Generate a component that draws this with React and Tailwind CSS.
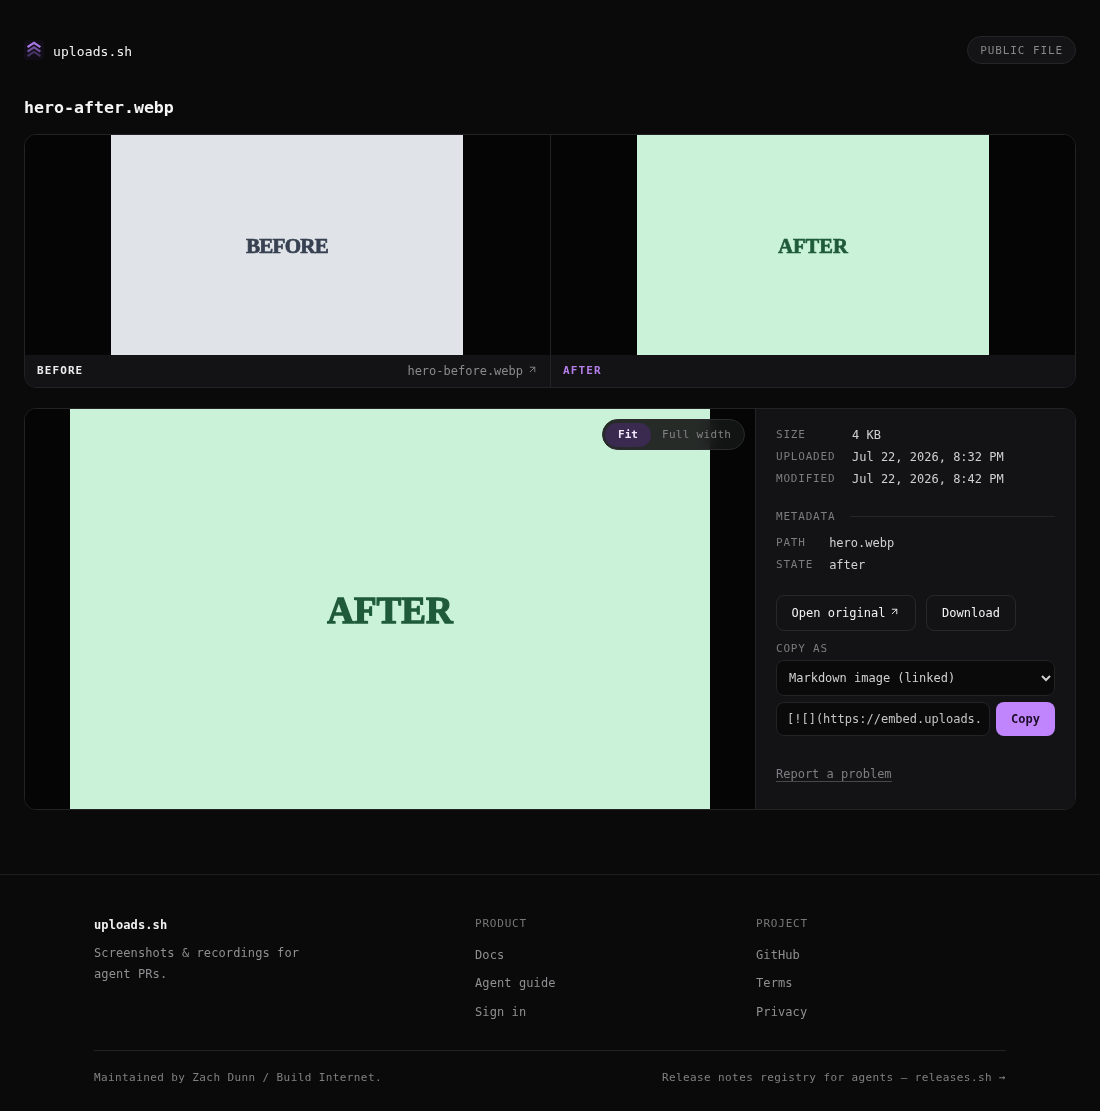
import { ArrowUpRight } from 'lucide-react'

const mono = "font-['DejaVu_Sans_Mono','Liberation_Mono',monospace]"

function Logo() {
  return (
    <svg width="20" height="20" viewBox="0 0 20 20" fill="none" strokeWidth="2.2" strokeLinecap="square">
      <rect width="20" height="20" rx="4" fill="#110e17" />
      <path d="M4.5 6.5 10 2.8 15.5 6.5" stroke="#a678e6" />
      <path d="M4.5 11 10 7.3 15.5 11" stroke="#71509c" />
      <path d="M4.5 15.5 10 11.8 15.5 15.5" stroke="#44325f" />
    </svg>
  )
}

function Label({ children, className = '' }) {
  return <span className={`text-[11px] leading-[22px] tracking-[0.8px] text-[#7c7c7e] ${className}`}>{children}</span>
}

function Row({ label, value }) {
  return (
    <>
      <Label>{label}</Label>
      <span className="text-xs leading-[22px] text-[#d0d0d1]">{value}</span>
    </>
  )
}

function Placeholder({ text, color, bg, size }) {
  return (
    <div className={`flex h-full items-center justify-center ${bg} ${color} ${size} font-['Liberation_Serif',serif] font-bold`}>
      {text}
    </div>
  )
}

function FooterCol({ title, links }) {
  return (
    <div>
      <div className="text-[11px] leading-4 tracking-[0.8px] text-[#777779]">{title}</div>
      <ul className="mt-[14px] flex flex-col gap-[10.4px] text-xs leading-[18px] tracking-[0.1px] text-[#8f8f91]">
        {links.map((l) => (
          <li key={l}>{l}</li>
        ))}
      </ul>
    </div>
  )
}

export default function App() {
  return (
    <div className="min-h-[1111px] bg-[#0a0a0b]">
      <div className={`text-white will-change-transform ${mono}`}>
        <div className="px-6">
          <header className="flex h-[102px] items-center justify-between pb-[2px]">
            <div className="flex items-center gap-[9px]">
              <Logo />
              <span className="pt-[3px] text-[13px] tracking-[0.1px] text-[#f2f2f3]">uploads.sh</span>
            </div>
            <span className="flex h-[28px] items-center rounded-full border border-[#252528] bg-[#141416] px-3 pt-[2px] text-[11px] tracking-[0.9px] text-[#88888a]">
              PUBLIC FILE
            </span>
          </header>

          <h1 className="mb-[19px] -mt-px text-[16.6px] leading-[14px] font-bold text-[#f5f5f6]">hero-after.webp</h1>

          <section className="grid grid-cols-[526px_1fr] overflow-hidden rounded-xl border border-[#232326]">
            <div className="border-r border-[#232326]">
              <div className="h-[220px] bg-[#050505] pl-[86px]">
                <div className="h-full w-[352px]">
                  <Placeholder text="BEFORE" bg="bg-[#e0e3e8]" color="text-[#374151]" size="pt-[3px] text-[21px] tracking-[-0.7px] [-webkit-text-stroke:0.7px_#374151]" />
                </div>
              </div>
              <div className="flex h-8 items-center justify-between bg-[#131316] px-3">
                <span className="text-[11px] font-bold tracking-[1.1px] text-[#ececee]">BEFORE</span>
                <span className="flex items-center gap-1 text-xs text-[#8a8a8c]">
                  hero-before.webp
                  <ArrowUpRight size={11} className="mb-1" />
                </span>
              </div>
            </div>
            <div>
              <div className="h-[220px] bg-[#050505] pl-[86px]">
                <div className="h-full w-[352px]">
                  <Placeholder text="AFTER" bg="bg-[#c9f2d8]" color="text-[#1f5b3a]" size="pt-[2px] text-[20.5px] [-webkit-text-stroke:0.7px_#1f5b3a]" />
                </div>
              </div>
              <div className="flex h-8 items-center bg-[#131316] px-3">
                <span className="text-[11px] font-bold tracking-[1.1px] text-[#b57ee8]">AFTER</span>
              </div>
            </div>
          </section>

          <section className="mt-5 flex overflow-hidden rounded-xl border border-[#232326]">
            <div className="relative flex h-[400px] w-[730px] justify-center bg-[#050505]">
              <div className="w-[640px]">
                <Placeholder text="AFTER" bg="bg-[#c9f2d8]" color="text-[#1f5b3a]" size="pt-1 text-[37px] [-webkit-text-stroke:1.3px_#1f5b3a]" />
              </div>
              <div className="absolute top-[10px] right-[10px] flex h-[31px] w-[143px] items-center rounded-full border border-[#2b2b2e] bg-[#141515]/90 pl-[2px] text-[11px] backdrop-blur-sm">
                <span className="flex h-[24px] w-[46px] items-center justify-center rounded-full bg-[#3a2a50] pt-[1px] font-bold text-[#f0e8fa]">Fit</span>
                <span className="ml-[11px] pt-[1px] tracking-[0.3px] text-[#828284]">Full width</span>
              </div>
            </div>

            <aside className="flex-1 border-l border-[#232326] bg-[#131316] px-5 pt-[15px]">
              <div className="grid grid-cols-[60px_1fr] gap-x-4">
                <Row label="SIZE" value="4 KB" />
                <Row label="UPLOADED" value="Jul 22, 2026, 8:32 PM" />
                <Row label="MODIFIED" value="Jul 22, 2026, 8:42 PM" />
              </div>

              <div className="mt-4 flex items-center gap-[15px]">
                <Label>METADATA</Label>
                <div className="mb-[2px] h-px flex-1 bg-[#252528]" />
              </div>

              <div className="mt-[4px] grid grid-cols-[auto_1fr] gap-x-4">
                <Row label="PATH" value="hero.webp" />
                <Row label="STATE" value="after" />
              </div>

              <div className="mt-[19px] flex gap-[10px]">
                <button className="flex h-9 w-[140px] items-center justify-center gap-1 rounded-lg border border-[#28282b] text-xs text-[#f2f2f3]">
                  Open original
                  <ArrowUpRight size={11} className="mb-1" />
                </button>
                <button className="h-9 w-[90px] rounded-lg border border-[#28282b] text-xs text-[#f2f2f3]">Download</button>
              </div>

              <div className="mt-[4px]">
                <Label>COPY AS</Label>
              </div>
              <select className="h-9 w-full rounded-lg border border-[#232326] bg-[#0a0a0b] pl-2 text-xs text-[#d0d0d1]">
                <option>Markdown image (linked)</option>
              </select>
              <div className="mt-[6px] flex gap-[6px]">
                <input
                  readOnly
                  value="[![](https://embed.uploads.sh/hero-after.webp)](https://embed.uploads.sh/hero-after.webp)"
                  className="h-[34px] min-w-0 flex-1 rounded-lg border border-[#232326] bg-[#0a0a0b] pr-2 pl-[10px] text-xs text-[#c4c4c6] outline-none"
                />
                <button className="h-[34px] w-[59px] rounded-lg bg-[#c084fc] text-xs font-bold text-[#1b0f2a]">Copy</button>
              </div>

              <a className="mt-[31px] inline-block border-b border-[#48484a] text-xs leading-[14px] text-[#7f7f81]">Report a problem</a>
            </aside>
          </section>
        </div>

        <footer className="mt-16 border-t border-[#1e1e21] px-[94px] pt-[41px]">
          <div className="grid h-[134px] grid-cols-[381px_281px_1fr]">
            <div className="-mt-px">
              <div className="text-xs leading-5 font-bold tracking-[0.1px] text-[#f0f0f1]">uploads.sh</div>
              <p className="mt-2 w-[220px] text-xs leading-[21px] tracking-[0.1px] text-[#8f8f91]">
                Screenshots &amp; recordings for agent PRs.
              </p>
            </div>
            <FooterCol title="PRODUCT" links={['Docs', 'Agent guide', 'Sign in']} />
            <FooterCol title="PROJECT" links={['GitHub', 'Terms', 'Privacy']} />
          </div>
          <div className="flex h-[54px] items-center justify-between border-t border-[#232326] pt-[2px] text-[11px] tracking-[0.4px] text-[#808082]">
            <span>Maintained by Zach Dunn / Build Internet.</span>
            <span>Release notes registry for agents — releases.sh →</span>
          </div>
        </footer>
      </div>
    </div>
  )
}
